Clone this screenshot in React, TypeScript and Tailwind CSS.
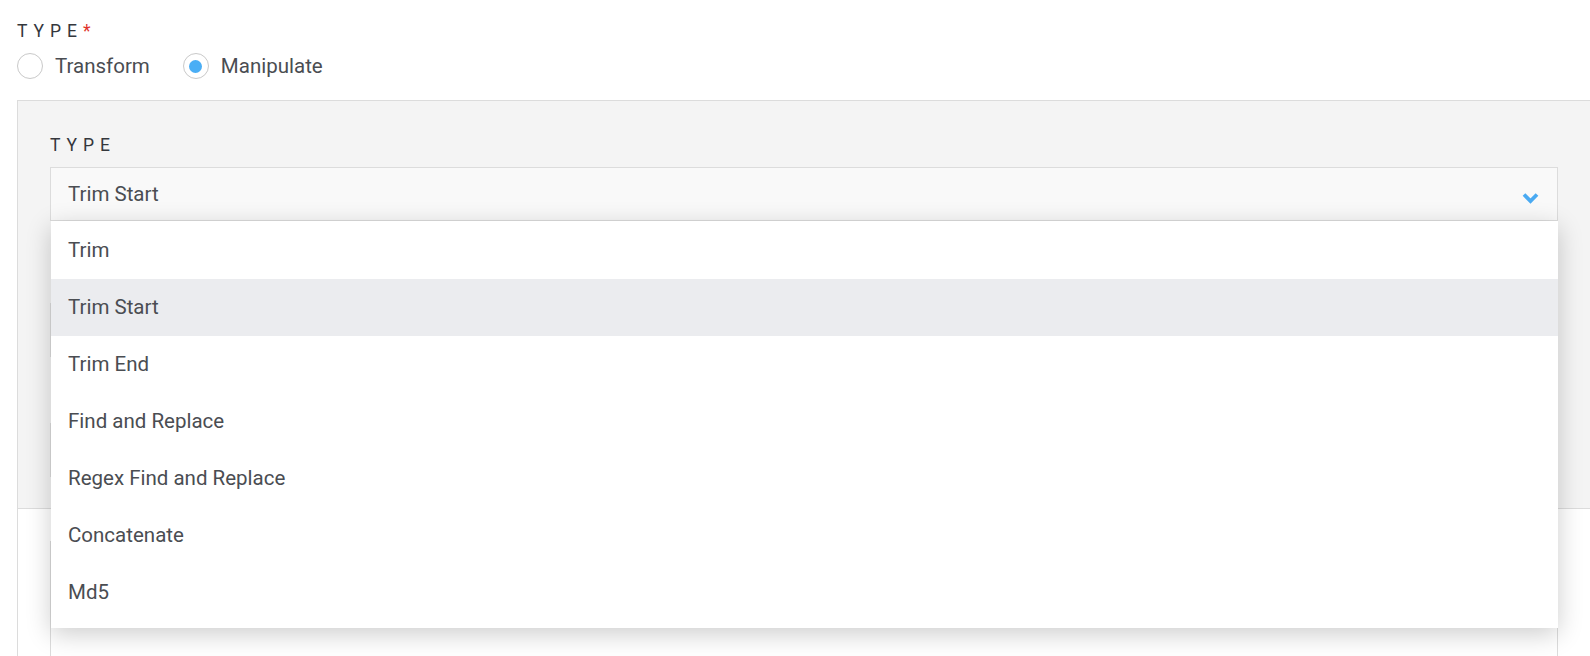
import React from 'react';

const options = ['Trim', 'Trim Start', 'Trim End', 'Find and Replace', 'Regex Find and Replace', 'Concatenate', 'Md5'];

const Radio = ({ label, checked }: { label: string; checked?: boolean }) => (
  <label className="flex items-center gap-[12px] h-[26px]">
    <span className="w-[26px] h-[26px] rounded-full border border-[#c9c9c9] bg-white flex items-center justify-center">
      {checked && <span className="w-[13px] h-[13px] rounded-full bg-[#4aaef5]" />}
    </span>
    <span className="text-[20.5px] text-[#4a4d52]">{label}</span>
  </label>
);

const FieldLabel = ({ children }: { children: React.ReactNode }) => (
  <div className="text-[17.5px] leading-[22px] tracking-[0.34em] text-[#34373c]">{children}</div>
);

const App: React.FC = () => {
  const selected = 'Trim Start';

  return (
    <div className="w-[1590px] h-[656px] overflow-hidden bg-white font-['Roboto',sans-serif]">
      {/* outer type field */}
      <div className="pl-[17px] pt-[20px]">
        <FieldLabel>
          TYPE<span className="text-[#e0312b]">*</span>
        </FieldLabel>
        <div className="flex gap-[33px] mt-[11px]">
          <Radio label="Transform" />
          <Radio label="Manipulate" checked />
        </div>
      </div>

      {/* manipulate panel */}
      <div className="ml-[17px] mt-[21px] w-[1600px] bg-[#f4f4f4] border-t border-l border-b border-[#dcdcdc] pl-[32px] pt-[33px] pb-[31px]">
        <div className="w-[1508px]">
          <FieldLabel>TYPE</FieldLabel>
          <div className="relative mt-[11px]">
            <div className="h-[54px] bg-[#f9f9f9] border border-[#dcdcdc] flex items-center justify-between pl-[17px] pr-[18px]">
              <span className="text-[20.5px] text-[#4a4d52]">{selected}</span>
              <svg width="17" height="12" viewBox="0 0 17 12" className="mt-[7px]">
                <polyline points="2,2.5 8.5,9 15,2.5" fill="none" stroke="#4aaaf2" strokeWidth="3.8" strokeLinejoin="miter" />
              </svg>
            </div>

            {/* open list */}
            <div className="absolute top-full left-[1px] right-0 z-10 bg-white pt-[1px] pb-[7px] shadow-[0_6px_24px_rgba(0,0,0,0.2)]">
              {options.map((o) => (
                <div
                  key={o}
                  className={`h-[57px] flex items-center pl-[17px] text-[20.5px] text-[#4a4d52] ${o === selected ? 'bg-[#ebecef]' : ''}`}
                >
                  {o}
                </div>
              ))}
            </div>
          </div>

          {/* fields hidden under the open list */}
          <div className="mt-[32px] h-[22px]" />
          <div className="mt-[28px] h-[54px] bg-white border border-[#dcdcdc]" />
          <div className="mt-[22px] h-[22px]" />
          <div className="mt-[22px] h-[54px] bg-white border border-[#dcdcdc]" />
        </div>
      </div>

      {/* section below */}
      <div className="ml-[17px] border-l border-[#dcdcdc] pl-[32px] pt-[32px] h-[200px]">
        <div className="w-[1508px] h-[160px] border border-[#dcdcdc] bg-white" />
      </div>
    </div>
  );
};

export default App;
